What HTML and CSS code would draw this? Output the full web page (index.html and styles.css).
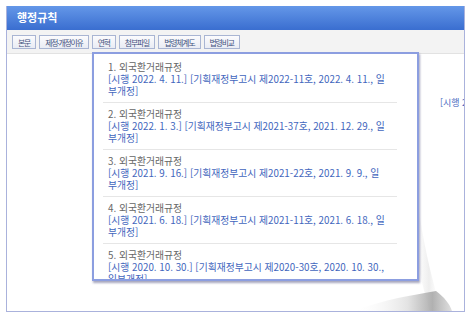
FILE: index.html
```html
<!DOCTYPE html>
<html lang="ko">
<head>
  <meta charset="UTF-8">
  <link rel="stylesheet" href="styles.css">
  <title>행정규칙</title>
</head>
<body>
  <div class="panel">
    <div class="head">행정규칙</div>
    <div class="tools">
      <span class="btn">본문</span>
      <span class="btn">제정·개정이유</span>
      <span class="btn">연혁</span>
      <span class="btn">첨부파일</span>
      <span class="btn">법령체계도</span>
      <span class="btn">법령비교</span>
    </div>
    <div class="content">
      <div class="doc-title">[시행 2022. 4. 11.] [기획재정부고시 제2022-11호]</div>
      <svg class="curl" width="120" height="170" viewBox="0 0 120 170">
        <defs>
          <linearGradient id="g1" x1="0" y1="0" x2="1" y2="0">
            <stop offset="0" stop-color="#ffffff" stop-opacity="0"/>
            <stop offset="0.6" stop-color="#e2e2e2"/>
            <stop offset="1" stop-color="#ffffff" stop-opacity="0"/>
          </linearGradient>
          <linearGradient id="g2" x1="0" y1="0" x2="1" y2="0">
            <stop offset="0" stop-color="#ffffff" stop-opacity="0"/>
            <stop offset="0.55" stop-color="#e0e0e0"/>
            <stop offset="0.8" stop-color="#a9a9a9"/>
            <stop offset="1" stop-color="#dcdcdc"/>
          </linearGradient>
        </defs>
        <path d="M66 0 C72 50 78 110 98 170 L86 170 C70 120 64 60 66 0 Z" fill="url(#g1)" opacity="0.6"/>
        <path d="M10 170 C40 158 70 154 92 150 C100 156 106 163 108 170 Z" fill="url(#g2)" opacity="0.9"/>
      </svg>
      <div class="popup">
        <ul class="hist">
          <li>
            <div class="name">1. 외국환거래규정</div>
            <div class="info">[시행 2022. 4. 11.] [기획재정부고시 제2022-11호, 2022. 4. 11., 일<br>부개정]</div>
          </li>
          <li>
            <div class="name">2. 외국환거래규정</div>
            <div class="info">[시행 2022. 1. 3.] [기획재정부고시 제2021-37호, 2021. 12. 29., 일<br>부개정]</div>
          </li>
          <li>
            <div class="name">3. 외국환거래규정</div>
            <div class="info">[시행 2021. 9. 16.] [기획재정부고시 제2021-22호, 2021. 9. 9., 일<br>부개정]</div>
          </li>
          <li>
            <div class="name">4. 외국환거래규정</div>
            <div class="info">[시행 2021. 6. 18.] [기획재정부고시 제2021-11호, 2021. 6. 18., 일<br>부개정]</div>
          </li>
          <li>
            <div class="name">5. 외국환거래규정</div>
            <div class="info">[시행 2020. 10. 30.] [기획재정부고시 제2020-30호, 2020. 10. 30.,<br>일부개정]</div>
          </li>
        </ul>
      </div>
    </div>
  </div>
</body>
</html>
```

FILE: styles.css
```css
body {
  margin: 0;
  background-color: #fff;
  font-family: 'Noto Sans CJK KR', 'Noto Sans', sans-serif;
}

.panel {
  position: relative;
  display: flex;
  flex-direction: column;
  margin: 6px 0 0 6px;
  width: 457px;
  height: 305px;
  border: 1px solid #aab2dc;
  border-top: none;
  overflow: hidden;
}

.head {
  height: 24px;
  line-height: 23px;
  padding-left: 10px;
  background: linear-gradient(#6497e8, #3a6ed0);
  color: #fff;
  font-size: 11px;
  font-weight: bold;
}

.tools {
  display: flex;
  gap: 3px;
  height: 24px;
  padding: 5px 0 0 5px;
  box-sizing: border-box;
  background-color: #f3f3f3;
  border-bottom: 1px solid #e2e2e2;
}

.btn {
  height: 14px;
  line-height: 13px;
  padding: 0 5px;
  font-size: 7.8px;
  letter-spacing: -1.1px;
  color: #42527e;
  background: linear-gradient(#fbfbfd, #e9ecf4);
  border: 1px solid #a9b5d3;
  box-sizing: border-box;
}

.content {
  position: relative;
  flex: 1;
}

.doc-title {
  padding: 42px 0 0 433px;
  white-space: nowrap;
  font-size: 9px;
  color: #4a6bbf;
}

.curl {
  position: absolute;
  right: 0;
  bottom: 0;
}

.popup {
  position: absolute;
  left: 85px;
  top: -2px;
  width: 323px;
  height: 225px;
  background-color: #fff;
  border: 2px solid #8c9ee0;
  box-shadow: 1px 2px 2px rgba(60, 60, 110, 0.45);
  overflow: hidden;
}

.hist {
  list-style: none;
  margin: 0 0 0 9px;
  padding: 2px 0 0;
  width: 294px;
}

.hist li {
  padding: 5px 0 5px 5px;
  border-bottom: 1px solid #e6e6e6;
}

.name {
  font-size: 9.8px;
  line-height: 12px;
  color: #666;
}

.info {
  font-size: 9.8px;
  line-height: 12px;
  color: #4266bd;
  white-space: nowrap;
}
```
